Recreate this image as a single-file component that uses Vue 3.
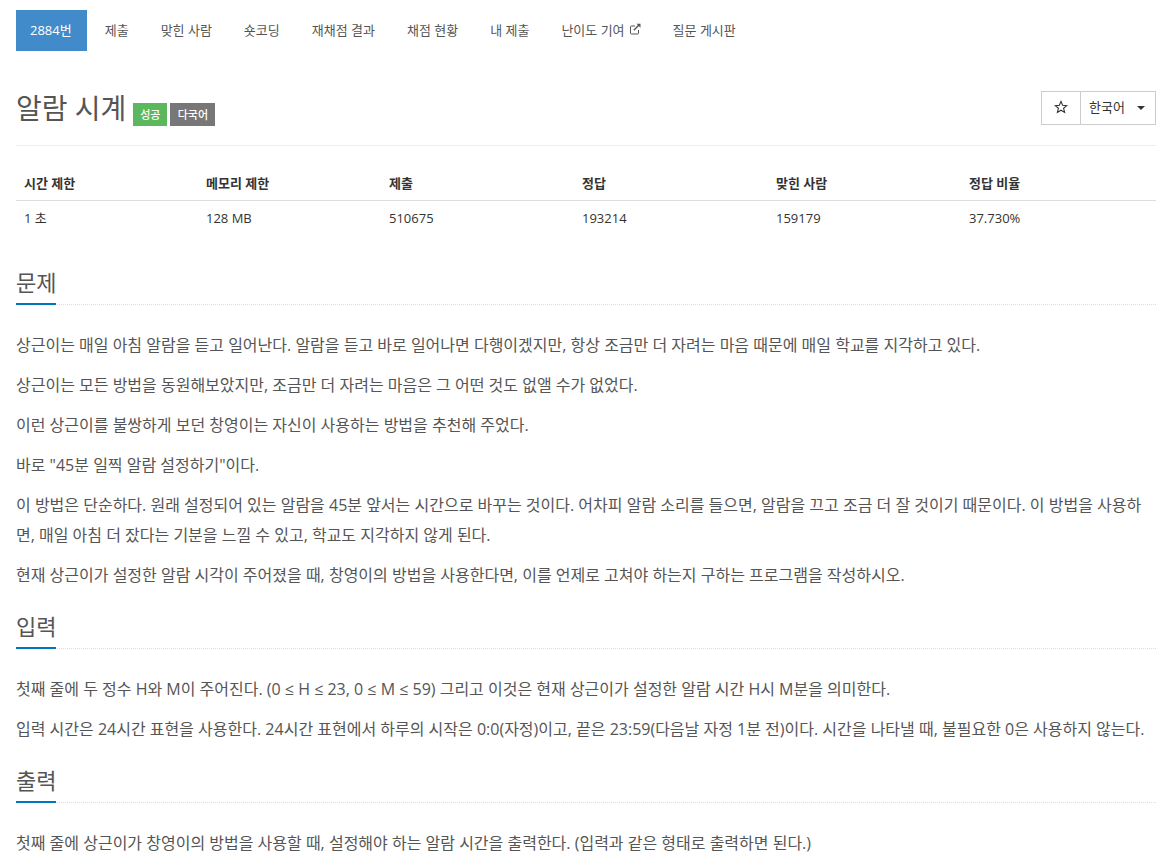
<script setup>
const tabs = ['제출', '맞힌 사람', '숏코딩', '재채점 결과', '채점 현황', '내 제출'];

const headers = ['시간 제한', '메모리 제한', '제출', '정답', '맞힌 사람', '정답 비율'];
const values = ['1 초', '128 MB', '510675', '193214', '159179', '37.730%'];

const sections = [
    {
        title: '문제',
        paragraphs: [
            '상근이는 매일 아침 알람을 듣고 일어난다. 알람을 듣고 바로 일어나면 다행이겠지만, 항상 조금만 더 자려는 마음 때문에 매일 학교를 지각하고 있다.',
            '상근이는 모든 방법을 동원해보았지만, 조금만 더 자려는 마음은 그 어떤 것도 없앨 수가 없었다.',
            '이런 상근이를 불쌍하게 보던 창영이는 자신이 사용하는 방법을 추천해 주었다.',
            '바로 "45분 일찍 알람 설정하기"이다.',
            '이 방법은 단순하다. 원래 설정되어 있는 알람을 45분 앞서는 시간으로 바꾸는 것이다. 어차피 알람 소리를 들으면, 알람을 끄고 조금 더 잘 것이기 때문이다. 이 방법을 사용하면, 매일 아침 더 잤다는 기분을 느낄 수 있고, 학교도 지각하지 않게 된다.',
            '현재 상근이가 설정한 알람 시각이 주어졌을 때, 창영이의 방법을 사용한다면, 이를 언제로 고쳐야 하는지 구하는 프로그램을 작성하시오.',
        ],
    },
    {
        title: '입력',
        paragraphs: [
            '첫째 줄에 두 정수 H와 M이 주어진다. (0 ≤ H ≤ 23, 0 ≤ M ≤ 59) 그리고 이것은 현재 상근이가 설정한 알람 시간 H시 M분을 의미한다.',
            '입력 시간은 24시간 표현을 사용한다. 24시간 표현에서 하루의 시작은 0:0(자정)이고, 끝은 23:59(다음날 자정 1분 전)이다. 시간을 나타낼 때, 불필요한 0은 사용하지 않는다.',
        ],
    },
    {
        title: '출력',
        paragraphs: ['첫째 줄에 상근이가 창영이의 방법을 사용할 때, 설정해야 하는 알람 시간을 출력한다. (입력과 같은 형태로 출력하면 된다.)'],
    },
];
</script>

<template>
    <div class="page">
        <ul class="tabs">
            <li class="tab active">2884번</li>
            <li v-for="tab in tabs" :key="tab" class="tab">{{ tab }}</li>
            <li class="tab">
                <span>난이도 기여</span>
                <svg class="ext" width="12" height="12" viewBox="0 0 12 12" fill="none" stroke="#555">
                    <path d="M9.5 7v3a1 1 0 0 1-1 1h-6a1 1 0 0 1-1-1V4a1 1 0 0 1 1-1h3.5" />
                    <path d="M4.8 7.2 10.5 1.5" stroke-width="1.4" />
                    <path d="M7.5.8h4v4z" fill="#555" stroke="none" />
                </svg>
            </li>
            <li class="tab">질문 게시판</li>
        </ul>

        <div class="header">
            <div class="title">
                <h1>알람 시계</h1>
                <span class="label green">성공</span>
                <span class="label gray">다국어</span>
            </div>
            <div class="btn-group">
                <button class="btn star">
                    <svg width="14" height="14" viewBox="0 0 14 14" fill="none" stroke="#333" stroke-width="1.1">
                        <path d="M7 1.4 8.6 5.3 12.8 5.6 9.6 8.3 10.6 12.4 7 10.2 3.4 12.4 4.4 8.3 1.2 5.6 5.4 5.3z" />
                    </svg>
                </button>
                <button class="btn lang">한국어<span class="caret"></span></button>
            </div>
        </div>

        <table class="stats">
            <thead>
                <tr>
                    <th v-for="h in headers" :key="h">{{ h }}</th>
                </tr>
            </thead>
            <tbody>
                <tr>
                    <td v-for="v in values" :key="v">{{ v }}</td>
                </tr>
            </tbody>
        </table>

        <section v-for="section in sections" :key="section.title" class="section">
            <div class="headline">
                <h2>{{ section.title }}</h2>
            </div>
            <p v-for="(text, i) in section.paragraphs" :key="i">{{ text }}</p>
        </section>
    </div>
</template>

<style>
body {
    background: #fff;
}
</style>

<style scoped>
.page {
    box-sizing: border-box;
    width: 1174px;
    height: 867px;
    overflow: hidden;
    padding: 10px 18px 0 16px;
    font-family: "Open Sans", "Noto Sans CJK KR", sans-serif;
    color: #555;
    font-size: 14px;
}

.tabs {
    display: flex;
    gap: 4px;
    list-style: none;
    margin: 0;
    padding: 0;
}

.tab {
    display: flex;
    align-items: center;
    height: 41px;
    padding: 0 14px 3px;
    box-sizing: border-box;
    font-size: 13px;
    color: #555;
    white-space: nowrap;
}

.tab.active {
    background: #428bca;
    color: #fff;
    padding-right: 15px;
}

.ext {
    margin-left: 4px;
}

.header {
    display: flex;
    justify-content: space-between;
    height: 94px;
    border-bottom: 1px solid #eee;
    box-sizing: content-box;
}

.title {
    display: flex;
    align-items: flex-start;
    padding-top: 36px;
}

h1 {
    margin: 0 7px 0 0;
    font-size: 28px;
    font-weight: 400;
    line-height: 42px;
    color: #555;
}

.label {
    box-sizing: border-box;
    margin-top: 16px;
    height: 23px;
    line-height: 23px;
    font-size: 11px;
    text-align: center;
    color: #fff;
    font-weight: 500;
}

.label.green {
    width: 34px;
    background: #5cb85c;
    margin-right: 3px;
}

.label.gray {
    width: 45px;
    background: #777;
}

.btn-group {
    display: flex;
    margin-top: 40px;
    height: 34px;
}

.btn {
    box-sizing: border-box;
    height: 34px;
    background: #fff;
    border: 1px solid #ccc;
    color: #333;
    font-family: inherit;
    padding: 0;
}

.star {
    width: 40px;
    display: flex;
    align-items: center;
    justify-content: center;
    padding-bottom: 2px;
}

.lang {
    width: 76px;
    margin-left: -1px;
    font-size: 13px;
    display: flex;
    align-items: center;
    padding-left: 8px;
    padding-bottom: 4px;
}

.caret {
    margin-left: 12px;
    margin-top: 4px;
    border-top: 4px solid #333;
    border-left: 4px solid transparent;
    border-right: 4px solid transparent;
}

.stats {
    width: 1140px;
    margin-top: 20px;
    border-collapse: collapse;
    table-layout: fixed;
    font-size: 13px;
    color: #333;
}

th,
td {
    text-align: left;
    padding: 8px;
    line-height: 18px;
}

th {
    font-weight: 700;
    border-bottom: 1px solid #ddd;
}

th:nth-child(1) { width: 166px; }
th:nth-child(2) { width: 167px; }
th:nth-child(3) { width: 177px; }
th:nth-child(4) { width: 178px; }
th:nth-child(5) { width: 177px; }

.section {
    width: 1140px;
}

.headline {
    border-bottom: 1px dotted #ddd;
    margin-top: 21px;
}

.stats + .section .headline {
    margin-top: 32px;
}

h2 {
    display: inline-block;
    margin: 0 0 -1px;
    padding: 0 0 6px;
    font-size: 22px;
    font-weight: 400;
    line-height: 30px;
    color: #555;
    border-bottom: 2px solid #0076c0;
    width: 40px;
    white-space: nowrap;
    vertical-align: bottom;
}

p {
    margin: 0 0 10px;
    font-size: 16px;
    line-height: 30px;
    color: #555;
}

.headline + p {
    margin-top: 25px;
}
</style>
